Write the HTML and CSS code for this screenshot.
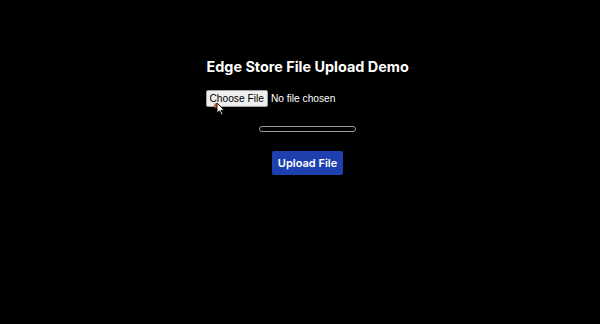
FILE: index.html
```html
<!DOCTYPE html>
<html lang="en">
<head>
    <meta charset="UTF-8">
    <meta name="viewport" content="width=device-width, initial-scale=1.0">
    <title>Edge Store File Upload Demo</title>
    <link rel="stylesheet" href="styles.css">
</head>
<body>
    <div class="page">
        <div class="uploader">
            <h2>Edge Store File Upload Demo</h2>
            <div class="picker">
                <input type="file" id="fileInput">
                <span class="click-dot"></span>
                <svg class="cursor" width="10" height="14" viewBox="0 0 10 14">
                    <path d="M1 1 L1 11 L3.5 8.8 L5.3 12.8 L6.8 12.1 L5 8.3 L8.2 8.1 Z" fill="#fff" stroke="#000" stroke-width="0.9"/>
                </svg>
            </div>
        </div>
        <div class="progress"><div class="progress-fill" style="width: 0%"></div></div>
        <button class="upload-btn">Upload File</button>
    </div>
</body>
</html>
```

FILE: styles.css
```css
body {
    margin: 0;
    background-color: #000;
    font-family: Inter, "Noto Sans", sans-serif;
    color: #fff;
}
.page {
    display: flex;
    flex-direction: column;
    align-items: center;
    padding: 56px 0 0 15px;
}
.uploader {
    width: 202px;
}
.uploader h2 {
    font-size: 14.4px;
    font-weight: 700;
    line-height: 22px;
    margin: 0 0 12px 0;
    white-space: nowrap;
}
.picker {
    position: relative;
    margin-left: -1px;
    height: 17px;
}
.picker input[type="file"] {
    display: block;
    font-family: "Liberation Sans", Arial, sans-serif;
    font-size: 10.2px;
    color: #fff;
    width: 150px;
}
.picker input[type="file"]::file-selector-button {
    font-family: "Liberation Sans", Arial, sans-serif;
    font-size: 10.2px;
    height: 17px;
    background-color: #efefef;
    color: #000;
    border: 1px solid #a0a0a0;
    border-radius: 2px;
    padding: 0 3px;
    margin-right: 3px;
}
.cursor {
    position: absolute;
    left: 10px;
    top: 12px;
}
.click-dot {
    position: absolute;
    left: 8px;
    top: 13px;
    width: 5px;
    height: 5px;
    border-radius: 50%;
    background-color: #c8662a;
}
.progress {
    width: 95px;
    height: 4px;
    border: 1px solid #9a9a9a;
    border-radius: 4px;
    margin-top: 19px;
    overflow: hidden;
}
.progress-fill {
    height: 100%;
    background-color: #fff;
}
.upload-btn {
    margin-top: 19px;
    width: 71px;
    height: 24px;
    background-color: #1e40af;
    color: #fff;
    border: none;
    border-radius: 2px;
    font-family: Inter, "Noto Sans", sans-serif;
    font-size: 11px;
    font-weight: 600;
    padding: 0;
}
```
